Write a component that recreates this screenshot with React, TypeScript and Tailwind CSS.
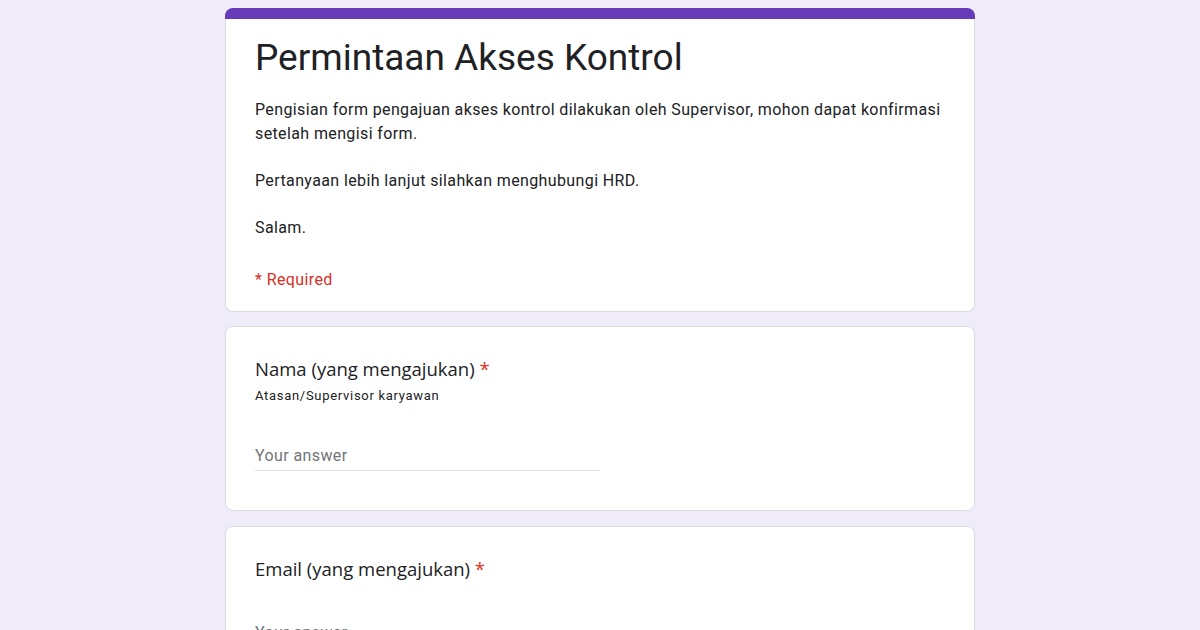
import React from "react"

const sans = "font-['Roboto','Liberation_Sans',sans-serif]"
const display = "font-['Open_Sans','Roboto',sans-serif]"

function Question({ title, help }: { title: string; help?: string }) {
  return (
    <div className="bg-white border border-[#dadce0] rounded-lg px-[29px] pt-[28px] pb-[39px]">
      <div className={`${display} text-[18.5px] leading-[28px] text-[#202124]`}>
        {title} <span className="text-[#d93025]">*</span>
      </div>
      {help && (
        <div className={`${sans} text-[13px] leading-[20px] tracking-[0.7px] text-[#202124] mt-[3px]`}>{help}</div>
      )}
      <div className="mt-[37px] w-[345px] border-b border-[#e0e0e0] pb-[2px]">
        <span className={`${sans} text-[16px] leading-[24px] tracking-[0.4px] text-[#70757a]`}>Your answer</span>
      </div>
    </div>
  )
}

export default function App() {
  return (
    <div className="bg-[#f0ebf8] flex flex-col items-center pt-2 gap-[14px] overflow-hidden h-[630px]">
      <div className="w-[750px] shrink-0">
        <div className="h-[11px] bg-[#673ab7] rounded-t-lg" />
        <div className="bg-white border border-t-0 border-[#dadce0] rounded-b-lg px-[29px] pt-[15px] pb-[19px]">
          <h1 className={`${sans} text-[37px] leading-[48px] text-[#202124]`}>Permintaan Akses Kontrol</h1>
          <div className={`${sans} text-[16px] leading-[23.5px] tracking-[0.38px] text-[#202124] mt-[16px]`}>
            <p>Pengisian form pengajuan akses kontrol dilakukan oleh Supervisor, mohon dapat konfirmasi setelah mengisi form.</p>
            <p className="mt-[23.5px]">Pertanyaan lebih lanjut silahkan menghubungi HRD.</p>
            <p className="mt-[23.5px]">Salam.</p>
          </div>
          <div className={`${sans} text-[16px] leading-[24px] tracking-[0.4px] text-[#d93025] mt-[29px]`}>* Required</div>
        </div>
      </div>
      <div className="w-[750px] shrink-0">
        <Question title="Nama (yang mengajukan)" help="Atasan/Supervisor karyawan" />
      </div>
      <div className="w-[750px] shrink-0 mt-px">
        <Question title="Email (yang mengajukan)" />
      </div>
    </div>
  )
}
